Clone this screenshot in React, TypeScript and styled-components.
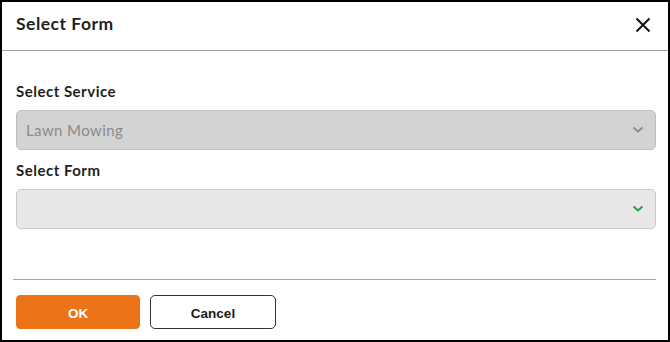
import React from "react"
import styled, { createGlobalStyle } from "styled-components"

const GlobalStyle = createGlobalStyle`
  html, body {
    margin: 0;
    padding: 0;
    background: #ffffff;
  }
  * {
    box-sizing: border-box;
  }
`

const Modal = styled.div`
  display: flex;
  flex-direction: column;
  width: 670px;
  height: 342px;
  border: 2px solid #000000;
  background: #ffffff;
  font-family: Lato, "Liberation Sans", sans-serif;
`

const Header = styled.div`
  display: flex;
  justify-content: space-between;
  align-items: flex-start;
  height: 49px;
  padding: 12px 16px 0 14px;
  border-bottom: 1px solid #a3a3a3;
`

const Title = styled.h1`
  margin: 0;
  font-size: 17.5px;
  line-height: 20px;
  font-weight: 700;
  letter-spacing: 0.5px;
  color: #1f1f1f;
`

const CloseButton = styled.button`
  display: flex;
  align-items: center;
  justify-content: center;
  width: 18px;
  height: 18px;
  margin-top: 2px;
  padding: 0;
  border: none;
  background: none;
  cursor: pointer;
`

const Body = styled.div`
  display: flex;
  flex-direction: column;
  flex: 1;
  padding: 31px 12px 0 14px;
`

const Field = styled.div`
  display: flex;
  flex-direction: column;
  margin-bottom: 11px;
`

const Label = styled.label`
  font-size: 15px;
  line-height: 18px;
  font-weight: 700;
  letter-spacing: 0.5px;
  color: #1f1f1f;
  margin-bottom: 10px;
`

const SelectBox = styled.div<{ $disabled?: boolean }>`
  display: flex;
  align-items: center;
  justify-content: space-between;
  height: 40px;
  padding: 0 11px 0 9px;
  border: 1px solid ${p => (p.$disabled ? "#bfbfbf" : "#c9c9c9")};
  border-radius: 5px;
  background: ${p => (p.$disabled ? "#d3d3d3" : "#e8e8e8")};
  font-size: 15px;
  line-height: 18px;
  letter-spacing: 0.4px;
  color: #8a8a8a;
`

const Footer = styled.div`
  display: flex;
  gap: 10px;
  height: 61px;
  margin: 0 12px 0 11px;
  padding: 15px 0 0 3px;
  border-top: 1px solid #a3a3a3;
`

const Button = styled.button<{ $primary?: boolean }>`
  width: ${p => (p.$primary ? "124px" : "126px")};
  height: 34px;
  border: 1px solid ${p => (p.$primary ? "#ed7318" : "#333333")};
  border-radius: ${p => (p.$primary ? "4px" : "5px")};
  background: ${p => (p.$primary ? "#ed7318" : "#ffffff")};
  color: ${p => (p.$primary ? "#ffffff" : "#1a1a1a")};
  font-family: "Liberation Sans", Arial, sans-serif;
  font-size: 13.5px;
  font-weight: 700;
  padding: 2px 0 0;
  cursor: pointer;
`

const Chevron = ({ color }: { color: string }) => (
  <svg width="12" height="8" viewBox="0 0 12 8">
    <path d="M1.5 1.5 L6 5.5 L10.5 1.5" fill="none" stroke={color} strokeWidth="1.8" />
  </svg>
)

export default function App() {
  return (
    <>
      <GlobalStyle />
      <Modal>
        <Header>
          <Title>Select Form</Title>
          <CloseButton aria-label="Close">
            <svg width="16" height="16" viewBox="0 0 16 16">
              <path d="M1.5 1.5 L14.5 14.5 M14.5 1.5 L1.5 14.5" stroke="#111111" strokeWidth="2" />
            </svg>
          </CloseButton>
        </Header>
        <Body>
          <Field>
            <Label>Select Service</Label>
            <SelectBox $disabled>
              <span>Lawn Mowing</span>
              <Chevron color="#8c8c8c" />
            </SelectBox>
          </Field>
          <Field>
            <Label>Select Form</Label>
            <SelectBox>
              <span />
              <Chevron color="#1f9e4c" />
            </SelectBox>
          </Field>
        </Body>
        <Footer>
          <Button $primary>OK</Button>
          <Button>Cancel</Button>
        </Footer>
      </Modal>
    </>
  )
}
